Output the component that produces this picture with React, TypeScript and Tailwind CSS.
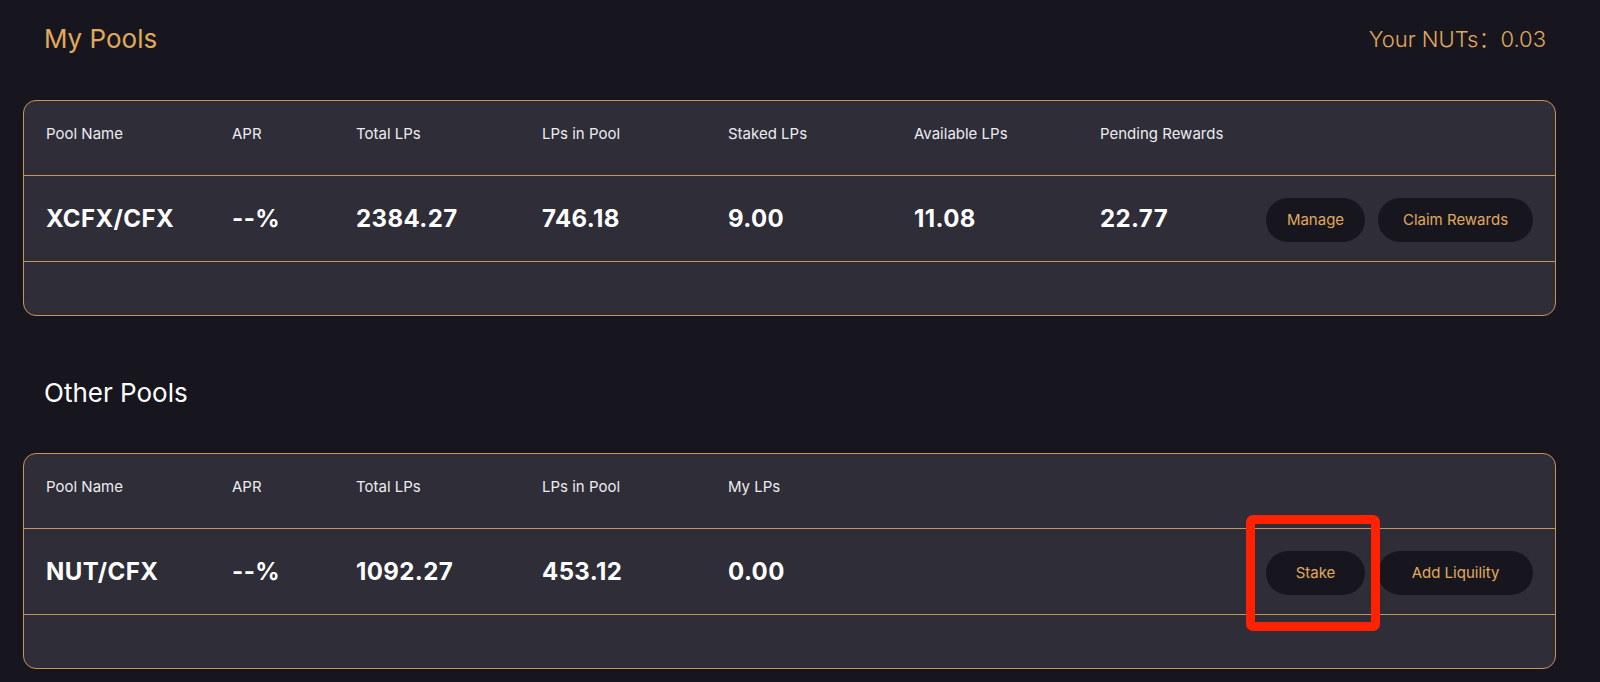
import type { ReactNode } from 'react'

const COLS = ['w-[186px]', 'w-[124px]', 'w-[186px]', 'w-[186px]', 'w-[186px]', 'w-[186px]', 'w-[150px]']

const MY_HEAD = ['Pool Name', 'APR', 'Total LPs', 'LPs in Pool', 'Staked LPs', 'Available LPs', 'Pending Rewards']
const MY_ROW = ['XCFX/CFX', '--%', '2384.27', '746.18', '9.00', '11.08', '22.77']

const OTHER_HEAD = ['Pool Name', 'APR', 'Total LPs', 'LPs in Pool', 'My LPs']
const OTHER_ROW = ['NUT/CFX', '--%', '1092.27', '453.12', '0.00']

function PillButton({ children, wide }: { children: ReactNode; wide?: boolean }) {
  return (
    <button
      type="button"
      className={`h-[44px] ${wide ? 'w-[155px]' : 'w-[99px]'} rounded-full bg-[#17161f] text-[15px] text-[#e0aa5c] flex items-center justify-center`}
    >
      {children}
    </button>
  )
}

function PoolCard({ head, row, actions }: { head: string[]; row: string[]; actions: ReactNode }) {
  return (
    <div className="w-[1533px] rounded-[13px] border border-[#c4965a] bg-[#2e2d38] overflow-hidden">
      {/* header */}
      <div className="h-[75px] flex items-center pb-[7px] pl-[22px] border-b border-[#c4965a]">
        {head.map((h, i) => (
          <div key={h} className={`${COLS[i]} shrink-0 text-[15px] text-[#ececef]`}>
            {h}
          </div>
        ))}
      </div>
      {/* row */}
      <div className="h-[86px] flex items-center pl-[22px] pr-[22px] border-b border-[#c4965a]">
        {row.map((v, i) => (
          <div key={i} className={`${COLS[i]} shrink-0 text-[24px] font-bold tracking-[0.4px] text-white`}>
            {v}
          </div>
        ))}
        <div className="ml-auto flex items-center gap-[13px] pt-[3px]">{actions}</div>
      </div>
      <div className="h-[53px]" />
    </div>
  )
}

export default function App() {
  return (
    <div
      className="min-h-[682px] w-[1600px] bg-[#17161f] pl-[23px]"
      style={{ fontFamily: 'Inter, "Noto Sans", "Noto Sans CJK SC", sans-serif' }}
    >
      <div className="w-[1533px] pt-[23px] flex items-center justify-between pl-[21px] pr-[10px] h-[55px]">
        <h1 className="text-[26px] leading-[32px] text-[#e0aa5c]">My Pools</h1>
        <div className="text-[22px] leading-[32px] font-light text-[#e0aa5c]">Your NUTs：0.03</div>
      </div>

      <div className="mt-[45px]">
        <PoolCard
          head={MY_HEAD}
          row={MY_ROW}
          actions={
            <>
              <PillButton>Manage</PillButton>
              <PillButton wide>Claim Rewards</PillButton>
            </>
          }
        />
      </div>

      <h2 className="mt-[61px] pl-[21px] text-[26px] leading-[32px] text-white">Other Pools</h2>

      <div className="mt-[44px] pb-[14px]">
        <PoolCard
          head={OTHER_HEAD}
          row={OTHER_ROW}
          actions={
            <>
              <div className="relative">
                <PillButton>Stake</PillButton>
                <span className="absolute -left-[20px] -right-[15px] -top-[36px] -bottom-[36px] rounded-[7px] border-[9px] border-[#ff2200] pointer-events-none" />
              </div>
              <PillButton wide>Add Liquility</PillButton>
            </>
          }
        />
      </div>
    </div>
  )
}
